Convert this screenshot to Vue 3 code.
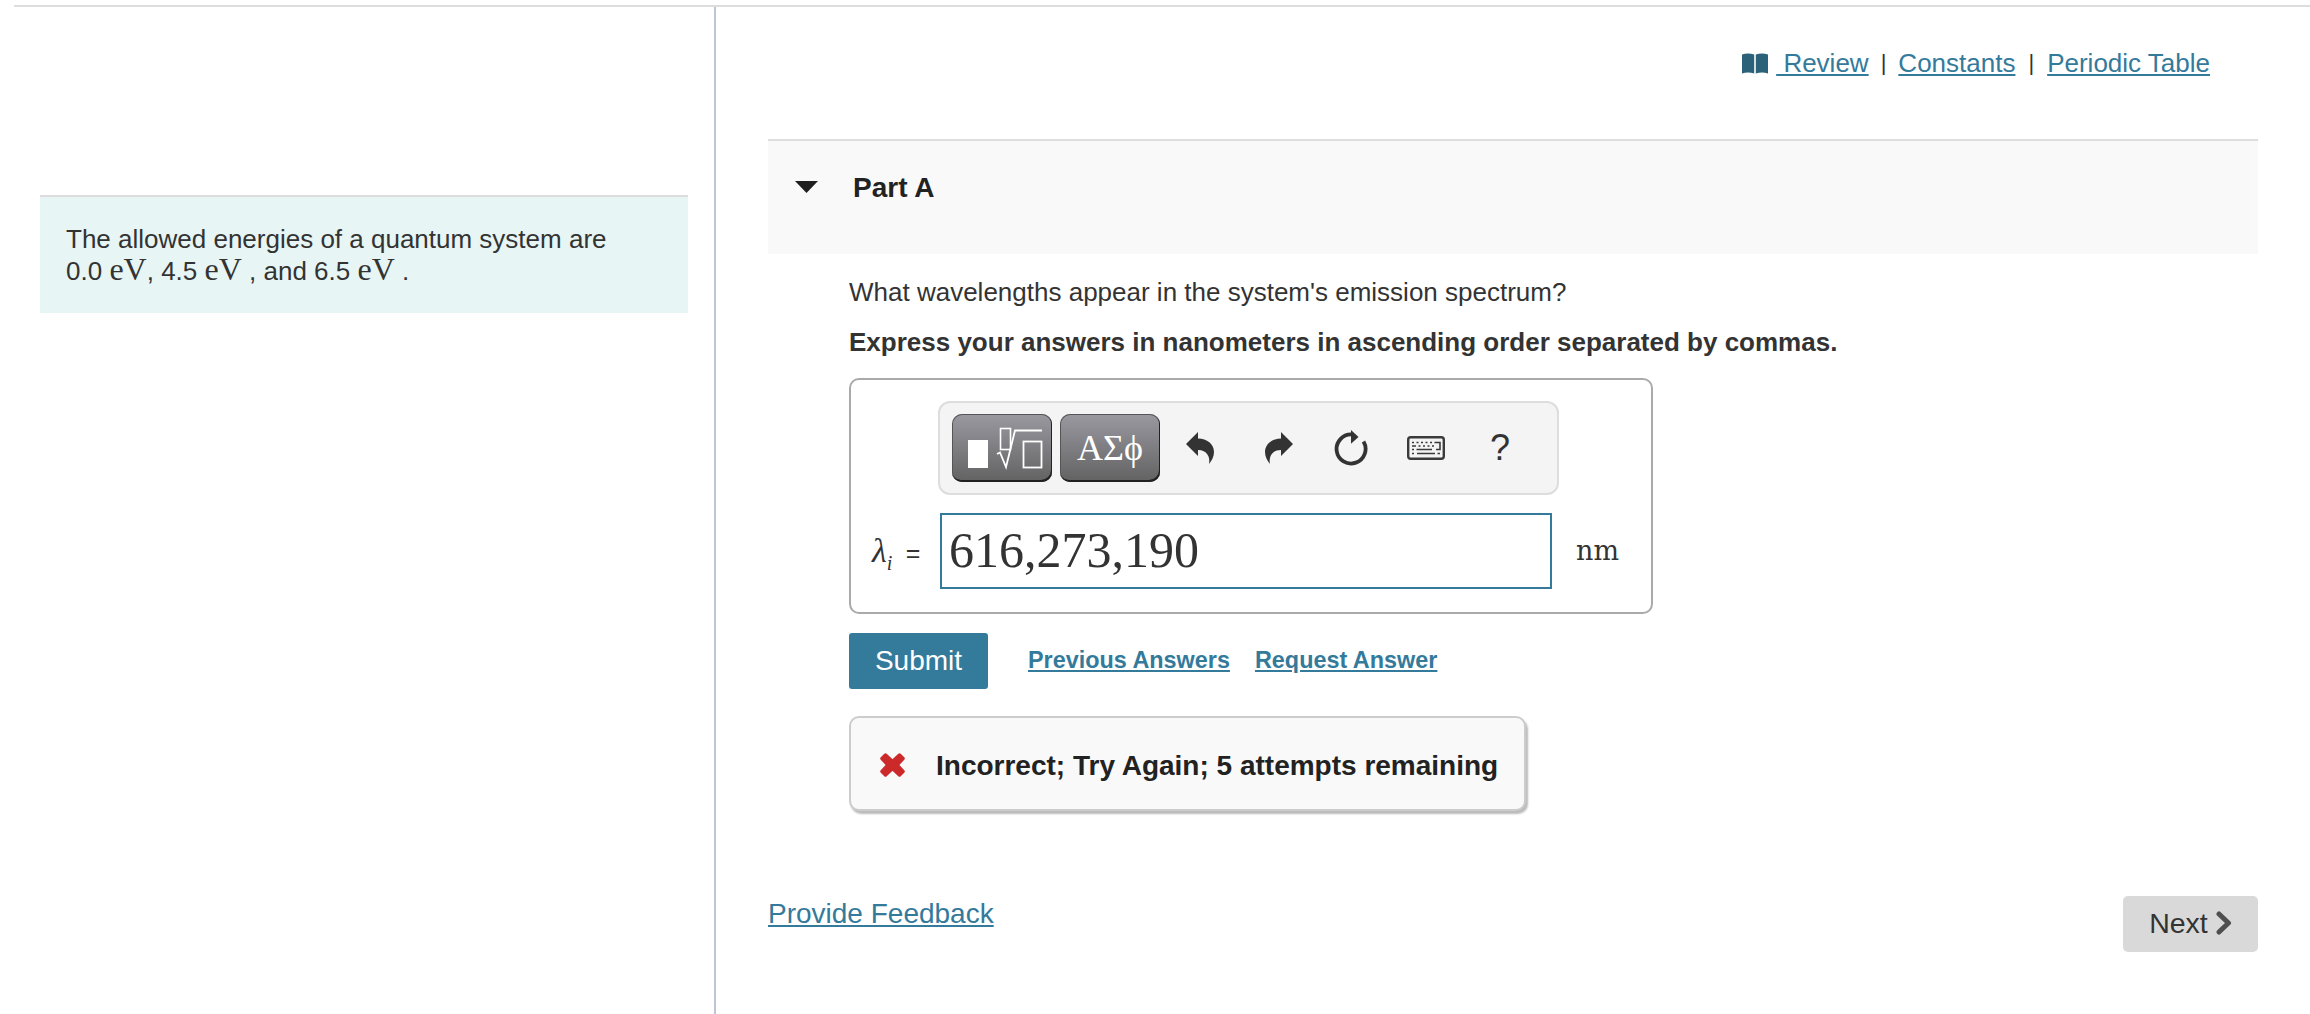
<script setup>
const links = ['Constants', 'Periodic Table']
</script>

<template>
  <div class="page">
    <div class="topline"></div>
    <div class="cols">
      <aside class="left">
        <div class="intro">
          The allowed energies of a quantum system are<br />
          0.0 <span class="tex">eV</span>, 4.5 <span class="tex">eV</span> , and 6.5 <span class="tex">eV</span> .
        </div>
      </aside>
      <main class="right">
        <nav class="toplinks">
          <svg class="book" viewBox="0 0 26 21" width="26" height="21"><path d="M0 1.500C4 0 8 0 12.200 1.500V20.500C8 19 4 19 0 20.500Z M13.800 1.500C18 0 22 0 26 1.500V20.500C22 19 18 19 13.800 20.500Z" fill="#2b6179"/></svg>
          <a class="link review">&nbsp;Review</a>
          <span class="sep first">|</span>
          <a class="link">{{ links[0] }}</a>
          <span class="sep">|</span>
          <a class="link">{{ links[1] }}</a>
        </nav>
        <section class="parthead">
          <svg class="tri" viewBox="0 0 23 12" width="23" height="12"><path d="M0 0H23L11.500 12Z" fill="#1f1f1f"/></svg>
          <h2>Part A</h2>
        </section>
        <div class="body">
          <p class="q">What wavelengths appear in the system's emission spectrum?</p>
          <p class="q bold">Express your answers in nanometers in ascending order separated by commas.</p>
          <div class="answer">
            <div class="toolbar">
              <button class="tbtn">
                <svg viewBox="0 0 100 68" width="100" height="68">
                  <rect x="16" y="26" width="20" height="28" fill="#fff"/>
                  <rect x="48.500" y="14.500" width="10" height="21" fill="none" stroke="#fff" stroke-width="1.600"/>
                  <path d="M45 40L48 38.500L54 53L63 16.500H90" fill="none" stroke="#fff" stroke-width="1.800"/>
                  <rect x="71.500" y="27.500" width="18" height="26" fill="none" stroke="#fff" stroke-width="1.800"/>
                </svg>
              </button>
              <button class="tbtn greek">ΑΣϕ</button>
              <svg class="ic undo" viewBox="0 0 28 32" width="28" height="32"><path d="M0 12L12 0V6.500C21 6.500 28 12 28 20C28 25 25.500 29 23 32C24.500 25 21 18 12 18V24Z" fill="#333"/></svg>
              <svg class="ic redo" viewBox="0 0 28 32" width="28" height="32"><path d="M28 12L16 0V6.500C7 6.500 0 12 0 20C0 25 2.500 29 5 32C3.500 25 7 18 16 18V24Z" fill="#333"/></svg>
              <svg class="ic reset" viewBox="0 0 34 36" width="34" height="36"><path d="M18 4.500A14.500 14.500 0 1 0 29.500 11.500" fill="none" stroke="#333" stroke-width="3.800"/><path d="M17 0L24.500 7L17 13.700Z" fill="#333"/></svg>
              <svg class="ic keys" viewBox="0 0 38 24" width="38" height="24">
                <rect x="1.200" y="1.200" width="35.600" height="21.600" rx="2.500" fill="none" stroke="#3a3a3a" stroke-width="2.400"/>
                <path d="M5 6.500H7M9.500 6.500H11.500M14 6.500H16M18.500 6.500H20.500M23 6.500H25M27.500 6.500H33V13.500H29M5 10H9M11.500 10H13.500M16 10H18M20.500 10H22.500M25 10H27M5 13.500H7M9.500 13.500H25M5 17.500H7M10 17.500H28M30.500 17.500H33" stroke="#3a3a3a" stroke-width="1.600" fill="none"/>
              </svg>
              <span class="help">?</span>
            </div>
            <div class="entry">
              <span class="var"><i>λ<sub>i</sub></i> <span class="eq">=</span></span>
              <div class="field">616,273,190</div>
              <span class="unit">nm</span>
            </div>
          </div>
          <div class="actions">
            <button class="submit">Submit</button>
            <a class="link small first">Previous Answers</a>
            <a class="link small">Request Answer</a>
          </div>
          <div class="feedback">
            <svg class="x" viewBox="0 0 27 26" width="27" height="26"><path d="M3 6.500L6.500 3L13.500 9.500L20.500 3L24 6.500L18 13L24 19.500L20.500 23L13.500 16.500L6.500 23L3 19.500L9 13Z" fill="#cc2a2a" stroke="#cc2a2a" stroke-width="3.500" stroke-linejoin="round"/></svg>
            <span class="msg">Incorrect; Try Again; 5 attempts remaining</span>
          </div>
        </div>
        <footer class="foot">
          <a class="link fb">Provide Feedback</a>
          <button class="next">Next
            <svg viewBox="0 0 16 24" width="16" height="24"><path d="M3 3L12.500 12L3 21" fill="none" stroke="#4f4f4f" stroke-width="5" stroke-linejoin="round" stroke-linecap="round"/></svg>
          </button>
        </footer>
      </main>
    </div>
  </div>
</template>

<style>
html, body { margin: 0; background: #fff; }
</style>

<style scoped>
.page {
  width: 2310px;
  height: 1014px;
  overflow: hidden;
  padding-top: 5px;
  box-sizing: border-box;
  font-family: "Liberation Sans", Arial, sans-serif;
  color: #333;
  background: #fff;
}
.topline { height: 2px; margin-left: 14px; background: #ddd; }
.cols { display: flex; height: 1007px; }
.left { width: 716px; box-sizing: border-box; border-right: 2px solid #bcc6d4; flex: none; }
.intro {
  margin: 188px 0 0 40px;
  width: 648px;
  box-sizing: border-box;
  height: 118px;
  border-top: 2px solid #ddd;
  background: #e7f6f5;
  padding: 26px 26px 0;
  font-size: 26px;
  line-height: 32px;
}
.tex { font-family: "Liberation Serif", serif; font-size: 32px; line-height: 0; }
.right { flex: 1; padding-left: 52px; padding-right: 52px; }
.toplinks {
  display: flex;
  align-items: center;
  justify-content: flex-end;
  height: 132px;
  padding: 0 48px 20px 0;
  box-sizing: border-box;
  font-size: 26px;
}
.book { margin-right: 8px; }
.sep { margin: 0 13px; font-size: 22px; color: #333; }
.sep.first { margin: 0 12px; }
.link { color: #347a9b; text-decoration: underline; cursor: pointer; }
.parthead {
  display: flex;
  height: 115px;
  box-sizing: border-box;
  border-top: 2px solid #ddd;
  background: #f9f9f9;
  padding: 40px 0 0 27px;
}
.parthead h2 {
  margin: -9px 0 0 35px;
  font-size: 28px;
  line-height: 32px;
  color: #222;
  font-weight: 700;
}
.body { padding-left: 81px; }
.q { margin: 0; font-size: 26px; line-height: 30px; padding-top: 23px; }
.q.bold { font-weight: 700; padding-top: 20px; }
.answer {
  width: 804px;
  height: 236px;
  box-sizing: border-box;
  margin-top: 21px;
  border: 2.500px solid #aaa;
  border-radius: 10px;
  padding-top: 21px;
}
.toolbar {
  display: flex;
  align-items: center;
  margin-left: 87px;
  width: 621px;
  height: 94px;
  box-sizing: border-box;
  padding-left: 12px;
  background: #f4f4f4;
  border: 2px solid #ddd;
  border-radius: 12px;
}
.tbtn {
  width: 100px;
  height: 68px;
  padding: 0;
  box-sizing: border-box;
  border: none;
  border-radius: 10px;
  background: linear-gradient(#9a99a1, #626262);
  box-shadow: inset -1px -2px 0 #222, inset 0 0 0 1px #555;
  color: #fff;
  margin-right: 8px;
  display: flex;
  align-items: center;
  justify-content: center;
}
.greek { font-family: "Liberation Serif", serif; font-size: 36px; }
.ic { flex: none; }
.undo { margin-left: 18px; }
.redo { margin-left: 51px; }
.reset { margin-left: 41px; }
.keys { margin-left: 39px; }
.help { margin-left: 45px; font-size: 36px; color: #333; }
.entry { display: flex; align-items: center; margin-top: 18px; }
.var {
  width: 89px;
  box-sizing: border-box;
  padding-left: 21px;
  font-family: "Liberation Serif", serif;
  font-size: 34px;
  white-space: nowrap;
}
.var sub { font-size: 20px; line-height: 0; }
.eq { font-family: "Liberation Sans", sans-serif; font-size: 25px; margin-left: 5px; }
.field {
  width: 612px;
  height: 76px;
  box-sizing: border-box;
  border: 2px solid #347a9b;
  padding-left: 7px;
  font-family: "Liberation Serif", serif;
  font-size: 50px;
  line-height: 70px;
  color: #333;
}
.unit { margin-left: 24px; font-family: "DejaVu Serif", serif; font-size: 27px; margin-top: -2px; }
.actions { display: flex; align-items: center; margin-top: 19px; }
.submit {
  width: 139px;
  height: 56px;
  border: none;
  border-radius: 3px;
  background: #347a9b;
  color: #fff;
  font-family: inherit;
  font-size: 28px;
  padding: 0;
}
.small { font-size: 23.400px; font-weight: 700; margin-top: -2px; margin-left: 25px; }
.small.first { margin-left: 40px; }
.feedback {
  display: flex;
  align-items: center;
  width: 677px;
  height: 95px;
  box-sizing: border-box;
  margin-top: 27px;
  padding: 2px 0 0 28px;
  background: #f9f9f9;
  border: 2px solid #ccc;
  border-radius: 10px;
  box-shadow: 2px 3px 2px #bbb;
  font-size: 28px;
  font-weight: 700;
  color: #222;
}
.msg { margin-top: 2px; }
.x { margin-right: 30px; flex: none; }
.foot {
  display: flex;
  justify-content: space-between;
  align-items: flex-start;
  margin-top: 85px;
}
.fb { font-size: 28px; line-height: 36px; }
.next {
  width: 135px;
  height: 56px;
  border: none;
  border-radius: 5px;
  background: #d9d9d9;
  font-family: inherit;
  font-size: 28.500px;
  color: #333;
  display: flex;
  align-items: center;
  justify-content: center;
  gap: 8px;
  padding: 0 0 2px;
}
</style>
